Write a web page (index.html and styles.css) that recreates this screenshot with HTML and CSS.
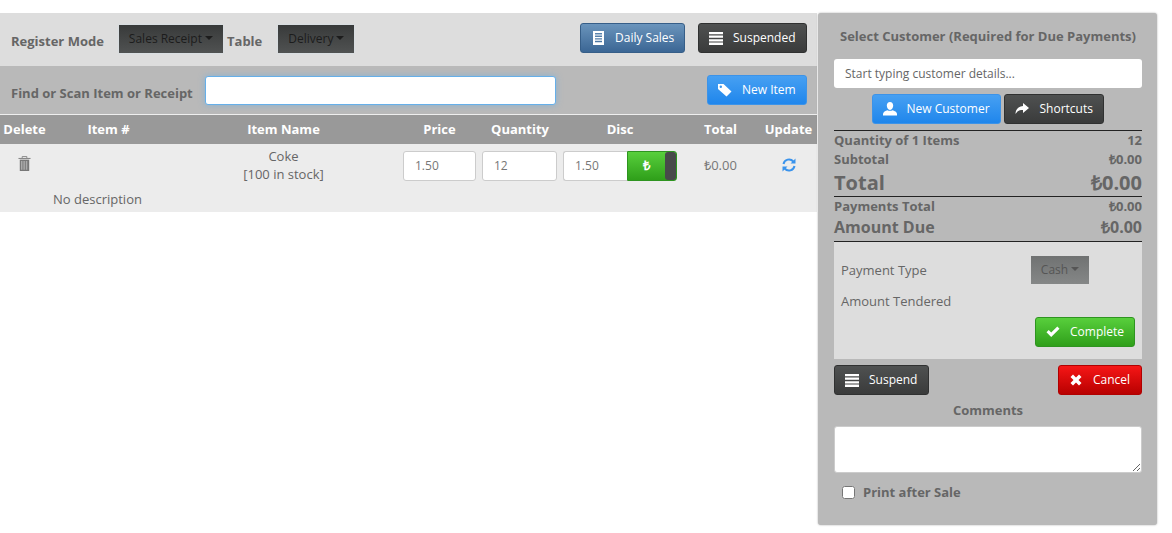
FILE: index.html
```html
<!DOCTYPE html>
<html lang="en">
<head>
<meta charset="utf-8">
<title>Register</title>
<link rel="stylesheet" href="styles.css">
</head>
<body>
<div class="page">
  <main class="left">
    <section class="bar bar-mode">
      <span class="lbl lbl-mode">Register Mode</span>
      <span class="drop">Sales Receipt<i class="caret"></i></span>
      <span class="lbl lbl-table">Table</span>
      <span class="drop drop-del">Delivery<i class="caret"></i></span>
      <span class="grow"></span>
      <a class="btn btn-blue-dark btn-daily"><svg class="ic" viewBox="0 0 14 14"><path fill="#fff" fill-rule="evenodd" d="M1 0h11v14H1zM3 2v1.400h7V2zm0 2.600V6h7V4.600zm0 2.600v1.400h7V7.200zm0 2.600v1.400h7V9.800z"/></svg><span>Daily Sales</span></a>
      <a class="btn btn-dark btn-susp"><svg class="ic" viewBox="0 0 14 14"><path fill="#fff" d="M0 1h14v2.200H0zm0 3.600h14v2.200H0zm0 3.600h14v2.200H0zm0 3.400h14V14H0z"/></svg><span>Suspended</span></a>
    </section>
    <section class="bar bar-find">
      <span class="lbl lbl-find">Find or Scan Item or Receipt</span>
      <input class="find" type="text" aria-label="Find">
      <span class="grow"></span>
      <a class="btn btn-blue btn-new"><svg class="ic" viewBox="0 0 14 14"><path fill="#fff" fill-rule="evenodd" d="M0 1h5.500l8 7.500-5 5L0 6zM2.800 2.600a1.200 1.200 0 1 0 0 2.400 1.200 1.200 0 0 0 0-2.400z"/></svg><span>New Item</span></a>
    </section>
    <div class="thead">
      <span class="c-del">Delete</span><span class="c-num">Item #</span><span class="c-name">Item Name</span><span class="c-price">Price</span><span class="c-qty">Quantity</span><span class="c-disc">Disc</span><span class="c-total">Total</span><span class="c-upd">Update</span>
    </div>
    <div class="row">
      <div class="row-main">
        <span class="c-del trash"><svg width="14" height="16" viewBox="0 0 14 16"><path fill="none" stroke="#888" d="M4.500 2.500v-2h5v2"/><path fill="#888" d="M0.500 2h13v1.200H0.500z"/><path fill="#aaa" d="M2 4h10v12H2z"/><path fill="#777" d="M2 4h1.200v12H2zm2.800 0h1v12h-1zm2.600 0h1v12h-1zm2.600 0H12v12h-2zM2 14.800h10V16H2zM2 4h10v1.200H2z"/></svg></span>
        <span class="c-num"></span>
        <span class="c-name name">Coke<br>[100 in stock]</span>
        <span class="c-price"><span class="field f-price">1.50</span></span>
        <span class="c-qty"><span class="field f-qty">12</span></span>
        <span class="c-disc disc"><span class="field f-disc">1.50</span><span class="tog"><b class="cur">₺</b><i></i></span></span>
        <span class="c-total tot"><span class="cur">₺</span>0.00</span>
        <span class="c-upd upd"><svg width="14" height="14" viewBox="0 0 14 14"><path fill="none" stroke="#3a93ec" stroke-width="2" d="M1.500 6a5.600 5.600 0 0 1 9.800-2.500M12.500 8a5.600 5.600 0 0 1-9.800 2.500"/><path fill="#3a93ec" d="M13.500 0.500v5h-5zM0.500 13.500v-5h5z"/></svg></span>
      </div>
      <div class="desc">No description</div>
    </div>
  </main>
  <aside class="side">
    <h2 class="side-title">Select Customer (Required for Due Payments)</h2>
    <div class="cust">Start typing customer details...</div>
    <div class="cust-btns">
      <a class="btn btn-blue btn-cust"><svg class="ic" viewBox="0 0 14 14"><path fill="#fff" d="M7 0c2 0 3.200 1.500 3.200 3.600S9 8 7 8 3.800 5.700 3.800 3.600 5 0 7 0zM4.600 8.200C5.400 9 8.600 9 9.400 8.200 11.500 9 14 9.800 14 12v1.500H0V12c0-2.200 2.500-3 4.600-3.800z"/></svg><span>New Customer</span></a>
      <a class="btn btn-dark btn-short"><svg class="ic" viewBox="0 0 14 14"><path fill="#fff" d="M8 1l6 5-6 5V8C5 8 2.500 8.600 0.500 12 0.500 7.500 3.500 4.300 8 4z"/></svg><span>Shortcuts</span></a>
    </div>
    <div class="sum sum-top">
      <div class="line l-sm"><span>Quantity of 1 Items</span><span>12</span></div>
      <div class="line l-sm l-sub"><span>Subtotal</span><span><span class="cur">₺</span>0.00</span></div>
      <div class="line l-lg"><span>Total</span><span><span class="cur">₺</span>0.00</span></div>
    </div>
    <div class="sum sum-mid">
      <div class="line l-sm"><span>Payments Total</span><span><span class="cur">₺</span>0.00</span></div>
      <div class="line l-md"><span>Amount Due</span><span><span class="cur">₺</span>0.00</span></div>
    </div>
    <div class="pay">
      <div class="pay-row"><span class="pay-lbl">Payment Type</span><span class="cash">Cash<i class="caret"></i></span></div>
      <div class="pay-tender">Amount Tendered</div>
      <div class="pay-end"><a class="btn btn-green btn-comp"><svg class="ic" viewBox="0 0 14 14"><path fill="#fff" d="M5.200 12L0.500 7.300l2.200-2.200 2.500 2.500L11.300 1.500l2.200 2.200z"/></svg><span>Complete</span></a></div>
    </div>
    <div class="acts">
      <a class="btn btn-dark btn-sp"><svg class="ic" viewBox="0 0 14 14"><path fill="#fff" d="M0 1h14v2.200H0zm0 3.600h14v2.200H0zm0 3.600h14v2.200H0zm0 3.400h14V14H0z"/></svg><span>Suspend</span></a>
      <a class="btn btn-red btn-cancel"><svg class="ic ic-x" viewBox="0 0 12 12"><path fill="#fff" d="M3 0.500L6 3.500 9 0.500 11.500 3 8.500 6 11.500 9 9 11.500 6 8.500 3 11.500 0.500 9 3.500 6 0.500 3z"/></svg><span>Cancel</span></a>
    </div>
    <div class="cm-title">Comments</div>
    <textarea class="cm" aria-label="Comments"></textarea>
    <label class="print"><input type="checkbox"><span>Print after Sale</span></label>
  </aside>
</div>
</body>
</html>
```

FILE: styles.css
```css
* { box-sizing: border-box; }
html, body { margin: 0; padding: 0; background: #fff; }
body { font-family: "Open Sans", "DejaVu Sans", sans-serif; font-size: 13px; color: #666; height: 533px; overflow: hidden; }
.page { display: flex; align-items: flex-start; padding-top: 13px; }
.left { width: 817px; flex: none; }
.grow { flex: 1; }
.cur { font-family: "Liberation Sans", sans-serif; }
.bar { display: flex; align-items: center; }
.bar-mode { height: 53px; background: #ddd; padding: 0 10px 3px 11px; }
.bar-find { background: #b9b9b9; padding: 0 10px 0 11px; border-bottom: 1px solid #eee; height: 49px; }
.lbl { font-weight: 700; font-size: 13px; color: #666; }
.lbl-mode { margin: 5px 15px 0 0; }
.lbl-table { margin: 5px 16px 0 4px; }
.lbl-find { margin-top: 6px; }
.drop { height: 28px; margin-top: 2px; padding: 0 10px 2px; display: inline-flex; align-items: center; background: linear-gradient(#383a3a, #505252); color: #1c1c1c; font-size: 12px; box-shadow: 0 0 2px #cfdfe9; }
.caret { display: inline-block; margin-left: 3px; border: 4px solid transparent; border-top-color: currentColor; border-bottom: 0; }
.btn { display: inline-flex; align-items: center; height: 30px; padding-bottom: 1px; border-radius: 3px; color: #fff; font-size: 12px; }
.ic { width: 14px; height: 14px; flex: none; }
.btn-blue-dark { background: linear-gradient(#6a94bc, #3b6694); border: 1px solid #365e88; }
.btn-dark { background: linear-gradient(#4f5151, #3a3b3b); border: 1px solid #303131; }
.btn-blue { background: linear-gradient(#47a0f2, #1f86ec); border: 1px solid #3c93e8; }
.btn-green { background: linear-gradient(#58cf3c, #2f9f1a); border: 1px solid #2e9420; }
.btn-red { background: linear-gradient(#f61616, #b80000); border: 1px solid #b00000; }
.btn-daily { width: 105px; padding-left: 11px; gap: 9px; margin-right: 13px; }
.btn-susp { width: 109px; padding-left: 10px; gap: 10px; }
.btn-new { width: 100px; padding-left: 10px; gap: 10px; }
.find { width: 351px; height: 29px; margin-left: 12px; border: 1px solid #66afe9; border-radius: 3px; background: #fff; box-shadow: 0 0 6px rgba(102,175,233,.6); outline: 0; }
.thead, .row-main { display: flex; }
.thead { height: 29px; padding-bottom: 2px; background: #999; color: #fff; font-weight: 700; font-size: 13px; align-items: center; }
.thead > span, .row-main > span { text-align: center; flex: none; }
.c-del { width: 49px; }
.c-num { width: 119px; }
.c-name { width: 231px; }
.c-price { width: 81px; }
.c-qty { width: 80px; }
.c-disc { width: 120px; }
.c-total { width: 81px; }
.c-upd { width: 55px; }
.row { height: 68px; background: #ececec; }
.row-main { padding-top: 3px; height: 46px; }
.trash { padding-top: 9px; }
.trash svg { width: 13px; height: 15px; }
.name { line-height: 18px; font-size: 13px; color: #666; }
.field { display: block; height: 30px; line-height: 28px; padding-left: 11px; background: #fff; border: 1px solid #ccc; border-radius: 3px; text-align: left; color: #777; font-size: 12px; }
.row-main .c-price { padding: 4px 0 0 4px; text-align: left; }
.f-price { width: 73px; }
.row-main .c-qty { padding: 4px 0 0 2px; text-align: left; }
.f-qty { width: 75px; }
.disc { display: flex; padding: 4px 0 0 3px; }
.f-disc { width: 64px; flex: none; border-radius: 3px 0 0 3px; border-right: 0; }
.tog { width: 50px; height: 30px; flex: none; display: flex; background: linear-gradient(#58cf3c, #2f9f1a); border: 1px solid #2e9420; border-radius: 0 3px 3px 0; color: #fff; }
.tog b { flex: 1; text-align: center; font-size: 13px; line-height: 27px; }
.tog i { width: 11px; background: #484a4a; border-radius: 3px; }
.row-main .tot { padding-top: 9px; font-size: 13px; color: #777; }
.upd { padding-top: 11px; }
.desc { padding-left: 53px; line-height: 18px; color: #666; }
.side { width: 339px; height: 512px; margin-left: 1px; background: #b9b9b9; border-radius: 3px; box-shadow: 0 0 2px rgba(0,0,0,.35); padding: 0 15px 0 16px; }
.side-title { margin: 14px 0 0; font-size: 13px; font-weight: 700; color: #666; text-align: center; line-height: 18px; white-space: nowrap; }
.cust { height: 29px; margin-top: 14px; background: #fff; border-radius: 3px; padding-left: 11px; line-height: 29px; font-size: 12px; color: #666; }
.cust-btns { display: flex; justify-content: center; gap: 3px; margin-top: 6px; padding-right: 1px; }
.btn-cust { width: 129px; padding-left: 10px; gap: 10px; }
.btn-short { width: 100px; padding-left: 10px; gap: 11px; }
.sum { border-top: 1px solid #222; }
.sum-top { margin-top: 6px; height: 66px; }
.sum-mid { height: 45px; }
.line { display: flex; justify-content: space-between; font-weight: 700; color: #666; }
.l-sm { font-size: 13px; line-height: 19px; }
.l-lg { font-size: 20px; line-height: 27px; }
.l-md { font-size: 16px; line-height: 22px; }
.pay { height: 118px; border-top: 1px solid #222; background: #ddd; padding: 14px 7px 0 7px; }
.pay-row { display: flex; align-items: center; height: 28px; }
.pay-lbl { width: 190px; color: #666; }
.cash { width: 58px; height: 28px; display: inline-flex; align-items: center; justify-content: center; padding-bottom: 2px; background: linear-gradient(#707272, #858787); color: #555; font-size: 12px; }
.pay-tender { margin-top: 8px; line-height: 18px; }
.pay-end { display: flex; justify-content: flex-end; margin-top: 7px; }
.btn-comp { width: 100px; padding-left: 10px; gap: 10px; }
.acts { display: flex; justify-content: space-between; margin-top: 6px; }
.btn-sp { width: 95px; padding-left: 10px; gap: 10px; }
.btn-cancel { width: 84px; padding-left: 11px; gap: 11px; }
.ic-x { width: 12px; height: 12px; }
.cm-title { margin-top: 6px; text-align: center; font-weight: 700; line-height: 18px; }
.cm { display: block; width: 100%; height: 47px; margin: 7px 0 0; border: 1px solid #ccc; border-radius: 3px; background: #fff; outline: 0; }
.print { display: flex; align-items: center; margin: 10px 0 0 8px; font-weight: 700; color: #666; }
.print input { margin: 0 8px 0 0; width: 13px; height: 13px; }
```
